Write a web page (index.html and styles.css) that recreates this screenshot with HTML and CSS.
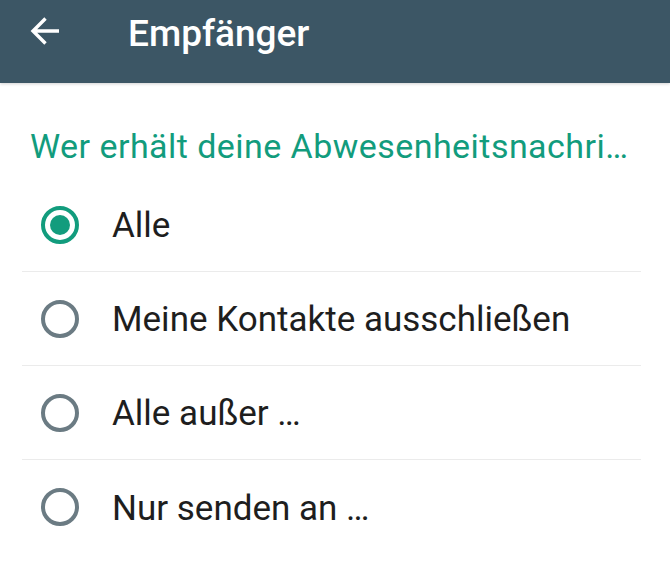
FILE: index.html
```html
<!DOCTYPE html>
<html lang="de">
<head>
<meta charset="utf-8">
<title>Empfänger</title>
<link rel="stylesheet" href="styles.css">
</head>
<body>
<header class="appbar">
  <svg class="back" width="30" height="30" viewBox="0 0 30 30" aria-hidden="true">
    <path d="M29 15H3M15.5 2.5L3 15l12.5 12.5" fill="none" stroke="#fff" stroke-width="3.4" stroke-linecap="butt" stroke-linejoin="miter"/>
  </svg>
  <h1 class="title">Empfänger</h1>
</header>
<main class="content">
  <h2 class="section">Wer erhält deine Abwesenheitsnachri…</h2>
  <ul class="options">
    <li class="option"><span class="radio checked"></span><span class="label">Alle</span></li>
    <li class="option"><span class="radio"></span><span class="label">Meine Kontakte ausschließen</span></li>
    <li class="option"><span class="radio"></span><span class="label">Alle außer …</span></li>
    <li class="option last"><span class="radio"></span><span class="label">Nur senden an …</span></li>
  </ul>
</main>
</body>
</html>
```
FILE: styles.css
```css
* { box-sizing: border-box; }
html, body { margin: 0; padding: 0; background: #fff; }
body { font-family: Roboto, "Noto Sans", sans-serif; width: 670px; height: 562px; overflow: hidden; }
.appbar {
  height: 83px;
  background: #3c5665;
  display: flex;
  align-items: flex-start;
  padding-left: 30px;
  box-shadow: 0 1px 3px rgba(0,0,0,0.18);
  position: relative;
}
.back { display: block; margin-top: 16px; flex: none; }
.title {
  margin: 12px 0 0 68px;
  color: #fff;
  font-size: 37px;
  line-height: 44px;
  font-weight: 500;
}
.content { padding: 0 29px 0 22px; }
.section {
  margin: 0;
  padding: 43px 0 0 8px;
  font-size: 34px;
  letter-spacing: 0.45px;
  font-weight: 400;
  color: #129c7d;
  white-space: nowrap;
  line-height: 40px;
}
.options { list-style: none; margin: 12px 0 0; padding: 0; }
.option {
  display: flex;
  align-items: center;
  height: 94px;
  border-bottom: 1px solid #ebebeb;
}
.option.last { border-bottom: none; }
.radio {
  width: 38px; height: 38px;
  border-radius: 50%;
  border: 4px solid #6b7b83;
  margin-left: 19px;
  flex: none;
  display: flex; align-items: center; justify-content: center;
}
.radio.checked { border-color: #129c7d; }
.radio.checked::after {
  content: ""; width: 20px; height: 20px; border-radius: 50%; background: #129c7d;
}
.label {
  margin-left: 33px;
  padding-top: 2px;
  font-size: 35px;
  color: #1e1e1e;
}
```
